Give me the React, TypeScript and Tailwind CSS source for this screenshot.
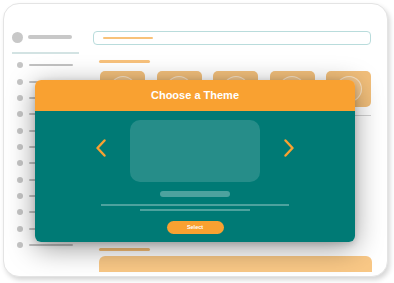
const sidebarRows = Array.from({ length: 12 }, (_, i) => i);
const tiles = Array.from({ length: 5 }, (_, i) => i);

export default function App() {
  return (
    <div className="relative h-[283px] w-[394px] overflow-hidden bg-white font-['Liberation_Sans',Arial,sans-serif]">
      {/* window card */}
      <div className="ml-[3px] mt-[3px] flex h-[274px] w-[385px] rounded-[16px] border border-[#e4e4e4] bg-white pt-[27px] shadow-[2px_3px_5px_rgba(0,0,0,0.16)]">
        <Sidebar />
        <div className="ml-[14px] flex w-[278px] flex-col">
          <div className="flex h-[14px] items-center rounded-[4px] border border-[#b9dcdc] pl-[9px]">
            <div className="h-[2px] w-[50px] rounded-full bg-[#f9c27a]" />
          </div>
          <div className="ml-[6px] mt-[15px] h-[3px] w-[51px] rounded-full bg-[#f8c27c]" />
          <div className="ml-[7px] mt-[8px] flex gap-[11.5px]">
            {tiles.map((t) => (
              <div
                key={t}
                className="flex h-[36px] w-[45px] items-center justify-center rounded-[5px] bg-[#f2bf7b]"
              >
                <div className="h-[26px] w-[26px] rounded-full border-[1.5px] border-white/50 bg-white/15" />
              </div>
            ))}
          </div>
          <div className="ml-[6px] mt-[8px] h-px w-[272px] bg-[#d2d2d2]" />
          <div className="ml-[6px] mt-[132px] h-[3px] w-[51px] rounded-full bg-[#f3bc74]" />
          <div className="ml-[6px] mt-[5px] h-[16px] w-[273px] rounded-t-[6px] bg-[#f9c886]" />
        </div>
      </div>

      <ThemeModal />
    </div>
  );
}

function Sidebar() {
  return (
    <div className="flex w-[75px] flex-col pl-[8px]">
      <div className="flex h-[12px] items-center">
        <div className="h-[11px] w-[11px] rounded-full bg-[#c8c8c8]" />
        <div className="ml-[5px] h-[4px] w-[44px] rounded-full bg-[#c8c8c8]" />
      </div>
      <div className="mt-[9px] h-[1.5px] w-[67px] bg-[#d3e3e3]" />
      <div className="mt-[3.5px] flex flex-col">
        {sidebarRows.map((r) => (
          <div key={r} className="flex h-[16.36px] items-center">
            <div className="ml-[5px] h-[6px] w-[6px] rounded-full bg-[#c6c6c6]" />
            <div className="ml-[6px] h-[2px] w-[44px] rounded-full bg-[#c2c2c2]" />
          </div>
        ))}
      </div>
    </div>
  );
}

function Chevron({ dir }: { dir: "left" | "right" }) {
  return (
    <svg
      viewBox="0 0 10 18"
      className="mt-[19px] h-[18px] w-[10px] shrink-0"
      fill="none"
      stroke="#f9a131"
      strokeWidth={2.4}
      strokeLinecap="round"
      strokeLinejoin="round"
    >
      <polyline points={dir === "left" ? "8.5,1.5 1.5,9 8.5,16.5" : "1.5,1.5 8.5,9 1.5,16.5"} />
    </svg>
  );
}

function ThemeModal() {
  return (
    <div className="absolute left-[35px] top-[80px] flex h-[162px] w-[320px] flex-col overflow-hidden rounded-[6px] shadow-[0_6px_28px_rgba(0,0,0,0.4),0_2px_6px_rgba(0,0,0,0.15)]">
      <div className="flex h-[31px] items-center justify-center bg-[#f9a131]">
        <h2 className="text-[11px] font-bold text-white">Choose a Theme</h2>
      </div>
      <div className="flex flex-1 flex-col items-center bg-[#007a75] pt-[9px]">
        <div className="flex items-start gap-[24px]">
          <Chevron dir="left" />
          <div className="h-[62px] w-[130px] rounded-[10px] bg-white/15" />
          <Chevron dir="right" />
        </div>
        <div className="mt-[9px] h-[6px] w-[70px] rounded-full bg-white/30" />
        <div className="mt-[7px] h-[1.5px] w-[188px] bg-white/30" />
        <div className="mt-[3.5px] h-[1.5px] w-[110px] bg-white/30" />
        <button className="mt-[10px] flex h-[13px] w-[57px] items-center justify-center rounded-full bg-[#f9a131] text-[5.5px] font-bold text-white">
          Select
        </button>
      </div>
    </div>
  );
}
